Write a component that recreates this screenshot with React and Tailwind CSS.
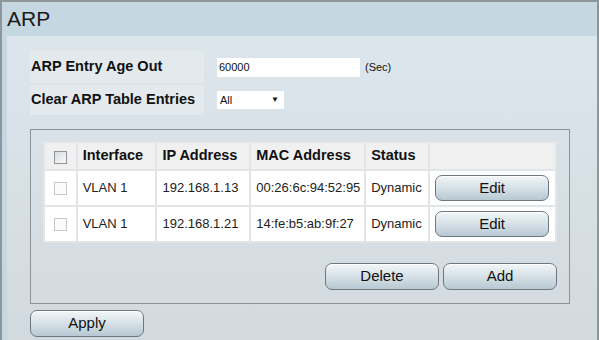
import React from "react";

const rows = [
  { iface: "VLAN 1", ip: "192.168.1.13", mac: "00:26:6c:94:52:95", status: "Dynamic" },
  { iface: "VLAN 1", ip: "192.168.1.21", mac: "14:fe:b5:ab:9f:27", status: "Dynamic" },
];

const GlossButton = ({ label, className = "" }) => (
  <button
    className={`h-[26px] w-[114px] rounded-[7px] border border-[#6d787e] bg-gradient-to-b from-[#f2f6f8] via-[#d6e1e7] to-[#b7c8d2] text-[14px] text-[#111] shadow-[inset_0_1px_0_#ffffff] ${className}`}
  >
    {label}
  </button>
);

const Checkbox = () => (
  <span className="inline-block h-[13px] w-[13px] border border-[#8e9499] bg-gradient-to-br from-[#d9dcde] to-[#fafafa]" />
);

export default function App() {
  return (
    <div
      className="flex h-[340px] w-[599px] flex-col border-x-2 border-t-2 border-[#8d969b] bg-[#c5d7e0] text-[#111]"
      style={{ fontFamily: '"Liberation Sans", Arial, sans-serif' }}
    >
      <div className="h-[34px] pl-[5px] pt-[5px] text-[21px] leading-[24px] text-[#1a1a1a]">ARP</div>

      <div className="ml-[5px] flex flex-1 flex-col bg-gradient-to-b from-[#dce6ec] to-[#d3dadf] pl-[23px] pt-[15px]">
        <div className="grid grid-cols-[174px_1fr] gap-y-[2px]">
          <div className="flex h-[32px] items-center bg-[#e3e9ed] pl-[1px] text-[14.5px] font-bold">
            ARP Entry Age Out
          </div>
          <div className="flex items-center pl-[13px]">
            <div className="flex h-[19px] w-[143px] items-center bg-white pl-[2px] text-[11px]">60000</div>
            <span className="ml-[5px] text-[11px]">(Sec)</span>
          </div>
          <div className="flex h-[30px] items-center bg-[#e3e9ed] pl-[1px] text-[14.5px] font-bold">
            Clear ARP Table Entries
          </div>
          <div className="flex items-center pl-[13px]">
            <div className="flex h-[18px] w-[67px] items-center justify-between bg-white px-[3px] text-[11px]">
              <span>All</span>
              <span className="mr-[2px] text-[8px]">▼</span>
            </div>
          </div>
        </div>

        <div className="mt-[14px] w-[540px] border border-[#8c9296] px-[12px] pt-[11px] pb-[13px]">
          <table className="w-[514px] border-separate border-spacing-[2px] bg-[#e1e5e7] text-[13px]">
            <thead>
              <tr className="h-[26px] bg-[#f0f0f0] text-left text-[14.5px] font-bold">
                <th className="w-[31px] text-center">
                  <div className="flex justify-center pt-[2px]">
                    <Checkbox />
                  </div>
                </th>
                <th className="w-[78px] pl-[5px]">Interface</th>
                <th className="w-[92px] pl-[5px]">IP Address</th>
                <th className="w-[113px] pl-[5px]">MAC Address</th>
                <th className="w-[62px] pl-[5px]">Status</th>
                <th className="w-[125px]"></th>
              </tr>
            </thead>
            <tbody>
              {rows.map((row) => (
                <tr key={row.ip} className="h-[34px] bg-white text-[#222]">
                  <td>
                    <div className="flex justify-center">
                      <span className="inline-block h-[13px] w-[13px] border border-[#c5c8ca] bg-[#fbfbfb]" />
                    </div>
                  </td>
                  <td className="pl-[5px]">{row.iface}</td>
                  <td className="pl-[5px]">{row.ip}</td>
                  <td className="pl-[5px]">{row.mac}</td>
                  <td className="pl-[5px]">{row.status}</td>
                  <td className="pl-[5px]">
                    <GlossButton label="Edit" className="h-[25px] text-[15px]" />
                  </td>
                </tr>
              ))}
            </tbody>
          </table>

          <div className="mt-[20px] flex justify-end gap-[4px]">
            <GlossButton label="Delete" className="h-[27px] text-[15px]" />
            <GlossButton label="Add" className="h-[27px] text-[15px]" />
          </div>
        </div>

        <div className="mt-[6px]">
          <GlossButton label="Apply" className="h-[27px] text-[15px]" />
        </div>
      </div>
    </div>
  );
}
